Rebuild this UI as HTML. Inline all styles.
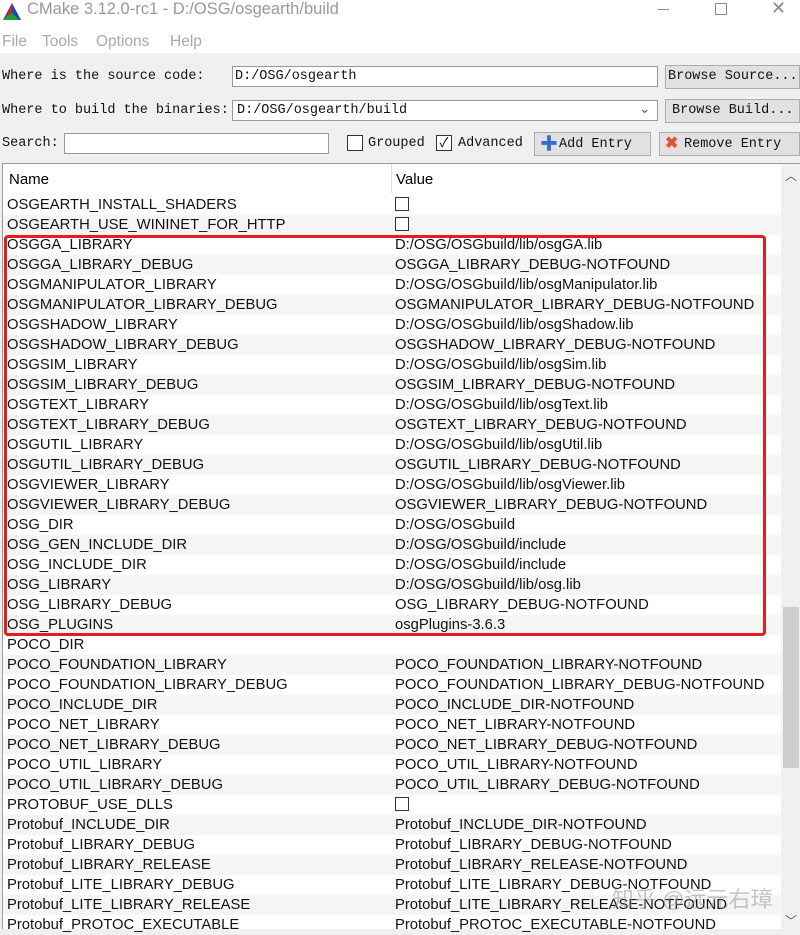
<!DOCTYPE html>
<html><head><meta charset="utf-8"><style>
*{margin:0;padding:0;box-sizing:border-box}
body{width:800px;height:929px;overflow:hidden;background:#f0f0f0;position:relative;font-family:"Liberation Sans","Noto Sans CJK SC",sans-serif}
.title{position:absolute;left:0;top:0;width:800px;height:24px;background:#fff}
.title span{position:absolute;left:27px;top:0px;font-size:16.5px;color:#999}
.menu{position:absolute;left:0;top:24px;width:800px;height:29px;background:#fff}
.menu span{position:absolute;top:9px;font-size:15.5px;color:#aaa}
.mono{font-family:"Liberation Mono","Noto Serif CJK SC",monospace;font-size:13.5px;color:#111;position:absolute;white-space:pre}
.inp{position:absolute;background:#fff;border:1px solid #999;height:21px}
.btn{position:absolute;background:#e1e1e1;border:1px solid #adadad;height:24px}
.table{position:absolute;left:2px;top:163px;width:798px;height:766px;background:#fff;border-left:1px solid #999;border-top:1px solid #999}
.row{position:absolute;left:0;width:778px;height:20px;font-size:14.8px;color:#111;line-height:20px}
.row.g{background:#f5f5f5}
.row .n{position:absolute;left:4px}
.row .v{position:absolute;left:392px}
.cb{display:inline-block;width:14px;height:14px;border:1px solid #333;background:#fff;vertical-align:middle;margin-top:-3px}
</style></head><body>
<div class="title">
<svg style="position:absolute;left:3px;top:3px" width="18" height="17" viewBox="0 0 18 17"><polygon points="9,0 0,17 18,17" fill="#1c47b4"/><polygon points="9,0 3,14 9,10" fill="#d02020"/><polygon points="3,14 9,10 16,17 0,17" fill="#2aa02a"/></svg>
<span>CMake 3.12.0-rc1 - D:/OSG/osgearth/build</span>
<div style="position:absolute;left:658px;top:9px;width:11px;height:1px;background:#888"></div>
<div style="position:absolute;left:715px;top:3px;width:12px;height:12px;border:1px solid #888"></div>
<span style="left:771px;top:-2px;color:#888;font-size:18px">✕</span>
</div>
<div class="menu"><span style="left:2px">File</span><span style="left:42px">Tools</span><span style="left:96px">Options</span><span style="left:170px">Help</span></div>
<div class="mono" style="left:2px;top:69px">Where is the source code:</div>
<div class="inp" style="left:232px;top:66px;width:426px"><div class="mono" style="left:2px;top:2px">D:/OSG/osgearth</div></div>
<div class="btn" style="left:665px;top:65px;width:135px"><div class="mono" style="left:2px;top:3px">Browse Source...</div></div>
<div class="mono" style="left:2px;top:103px">Where to build the binaries:</div>
<div class="inp" style="left:232px;top:100px;width:426px"><div class="mono" style="left:4px;top:2px">D:/OSG/osgearth/build</div><div class="mono" style="left:406px;top:0px;color:#555">⌄</div></div>
<div class="btn" style="left:665px;top:99px;width:135px"><div class="mono" style="left:6px;top:3px">Browse Build...</div></div>
<div class="mono" style="left:2px;top:136px">Search:</div>
<div class="inp" style="left:64px;top:133px;width:265px"></div>
<div style="position:absolute;left:347px;top:135px;width:16px;height:16px;border:1px solid #333;background:#fff"></div>
<div class="mono" style="left:368px;top:136px">Grouped</div>
<div style="position:absolute;left:436px;top:135px;width:16px;height:16px;border:1px solid #333;background:#fff;font-size:13px;line-height:14px;text-align:center">✓</div>
<div class="mono" style="left:458px;top:136px">Advanced</div>
<div class="btn" style="left:534px;top:132px;width:117px"><div style="position:absolute;left:5px;top:3px;color:#3a6ad0;font-size:18px;line-height:16px;font-weight:bold">✚</div><div class="mono" style="left:24px;top:4px">Add Entry</div></div>
<div class="btn" style="left:659px;top:132px;width:141px"><div style="position:absolute;left:5px;top:3px;color:#e0553a;font-size:16px;line-height:16px;font-weight:bold">✖</div><div class="mono" style="left:24px;top:4px">Remove Entry</div></div>
<div class="table">
<div style="position:absolute;left:0;top:0;width:778px;height:29px;background:#fff"><span style="position:absolute;left:6px;top:7px;font-size:15px">Name</span><div style="position:absolute;left:388px;top:0;width:1px;height:29px;background:#ddd"></div><span style="position:absolute;left:393px;top:7px;font-size:15px">Value</span></div>
<div style="position:absolute;left:778px;top:0;width:20px;height:766px;background:#f0f0f0"><div style="position:absolute;left:4px;top:3px;color:#555;font-size:12px">︿</div><div style="position:absolute;left:2px;top:443px;width:16px;height:161px;background:#cdcdcd"></div><div style="position:absolute;left:4px;top:748px;color:#555;font-size:12px">﹀</div></div>
<div id="rows"></div>
</div>
<div style="position:absolute;left:4px;top:235px;width:762px;height:401px;border:3px solid #e02020;border-radius:4px"></div>
<div style="position:absolute;left:612px;top:882px;font-size:22px;color:rgba(150,150,150,0.55)">知乎 @远元右璋</div>
<script>
var d=[["OSGEARTH_INSTALL_SHADERS","#cb"],["OSGEARTH_USE_WININET_FOR_HTTP","#cb"],["OSGGA_LIBRARY","D:/OSG/OSGbuild/lib/osgGA.lib"],["OSGGA_LIBRARY_DEBUG","OSGGA_LIBRARY_DEBUG-NOTFOUND"],["OSGMANIPULATOR_LIBRARY","D:/OSG/OSGbuild/lib/osgManipulator.lib"],["OSGMANIPULATOR_LIBRARY_DEBUG","OSGMANIPULATOR_LIBRARY_DEBUG-NOTFOUND"],["OSGSHADOW_LIBRARY","D:/OSG/OSGbuild/lib/osgShadow.lib"],["OSGSHADOW_LIBRARY_DEBUG","OSGSHADOW_LIBRARY_DEBUG-NOTFOUND"],["OSGSIM_LIBRARY","D:/OSG/OSGbuild/lib/osgSim.lib"],["OSGSIM_LIBRARY_DEBUG","OSGSIM_LIBRARY_DEBUG-NOTFOUND"],["OSGTEXT_LIBRARY","D:/OSG/OSGbuild/lib/osgText.lib"],["OSGTEXT_LIBRARY_DEBUG","OSGTEXT_LIBRARY_DEBUG-NOTFOUND"],["OSGUTIL_LIBRARY","D:/OSG/OSGbuild/lib/osgUtil.lib"],["OSGUTIL_LIBRARY_DEBUG","OSGUTIL_LIBRARY_DEBUG-NOTFOUND"],["OSGVIEWER_LIBRARY","D:/OSG/OSGbuild/lib/osgViewer.lib"],["OSGVIEWER_LIBRARY_DEBUG","OSGVIEWER_LIBRARY_DEBUG-NOTFOUND"],["OSG_DIR","D:/OSG/OSGbuild"],["OSG_GEN_INCLUDE_DIR","D:/OSG/OSGbuild/include"],["OSG_INCLUDE_DIR","D:/OSG/OSGbuild/include"],["OSG_LIBRARY","D:/OSG/OSGbuild/lib/osg.lib"],["OSG_LIBRARY_DEBUG","OSG_LIBRARY_DEBUG-NOTFOUND"],["OSG_PLUGINS","osgPlugins-3.6.3"],["POCO_DIR",""],["POCO_FOUNDATION_LIBRARY","POCO_FOUNDATION_LIBRARY-NOTFOUND"],["POCO_FOUNDATION_LIBRARY_DEBUG","POCO_FOUNDATION_LIBRARY_DEBUG-NOTFOUND"],["POCO_INCLUDE_DIR","POCO_INCLUDE_DIR-NOTFOUND"],["POCO_NET_LIBRARY","POCO_NET_LIBRARY-NOTFOUND"],["POCO_NET_LIBRARY_DEBUG","POCO_NET_LIBRARY_DEBUG-NOTFOUND"],["POCO_UTIL_LIBRARY","POCO_UTIL_LIBRARY-NOTFOUND"],["POCO_UTIL_LIBRARY_DEBUG","POCO_UTIL_LIBRARY_DEBUG-NOTFOUND"],["PROTOBUF_USE_DLLS","#cb"],["Protobuf_INCLUDE_DIR","Protobuf_INCLUDE_DIR-NOTFOUND"],["Protobuf_LIBRARY_DEBUG","Protobuf_LIBRARY_DEBUG-NOTFOUND"],["Protobuf_LIBRARY_RELEASE","Protobuf_LIBRARY_RELEASE-NOTFOUND"],["Protobuf_LITE_LIBRARY_DEBUG","Protobuf_LITE_LIBRARY_DEBUG-NOTFOUND"],["Protobuf_LITE_LIBRARY_RELEASE","Protobuf_LITE_LIBRARY_RELEASE-NOTFOUND"],["Protobuf_PROTOC_EXECUTABLE","Protobuf_PROTOC_EXECUTABLE-NOTFOUND"]];
var h="";d.forEach(function(r,i){var v=r[1]=="#cb"?'<span class="cb"></span>':r[1];h+='<div class="row'+(i%2?' g':'')+'" style="top:'+(31+i*20)+'px"><span class="n">'+r[0]+'</span><span class="v">'+v+'</span></div>';});
document.getElementById("rows").innerHTML=h;
</script>
</body></html>
